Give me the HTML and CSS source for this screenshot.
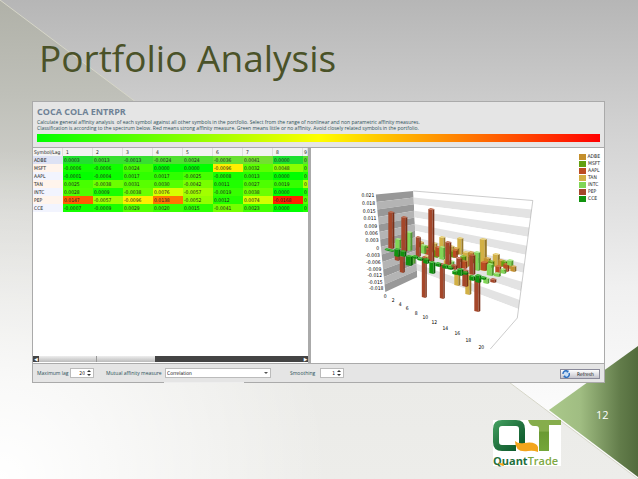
FILE: index.html
```html
<!DOCTYPE html>
<html lang="en">
<head>
<meta charset="UTF-8">
<meta name="viewport" content="width=device-width, initial-scale=1.0">
<title>Portfolio Analysis</title>
<link rel="stylesheet" href="styles.css">
</head>
<body>
<div class="slide">
    <svg class="backdrop" viewBox="0 0 638 479" preserveAspectRatio="none" aria-hidden="true">
        <defs>
            <linearGradient id="shade" x1="0" y1="0" x2="0" y2="1">
                <stop offset="0" stop-color="#b0b1a8"/>
                <stop offset="0.2" stop-color="#bfc0b9"/>
                <stop offset="0.45" stop-color="#d6d6d2"/>
                <stop offset="0.8" stop-color="#ebebe8"/>
                <stop offset="1" stop-color="#ededea"/>
            </linearGradient>
            <radialGradient id="glow" gradientUnits="userSpaceOnUse" cx="0" cy="479" r="330">
                <stop offset="0" stop-color="#fff" stop-opacity="1"/>
                <stop offset="1" stop-color="#fff" stop-opacity="0"/>
            </radialGradient>
            <linearGradient id="green" x1="0" y1="0" x2="1" y2="0">
                <stop offset="0" stop-color="#abc98b"/>
                <stop offset="0.35" stop-color="#a0bd82"/>
                <stop offset="0.8" stop-color="#627c4a"/>
                <stop offset="1" stop-color="#526b3c"/>
            </linearGradient>
        </defs>
        <polygon points="0,0 638,479 0,479" fill="url(#shade)"/>
        <polygon points="0,0 638,479 0,479" fill="url(#glow)"/>
        <path d="M0 0L638 479" stroke="#d6d6c8" stroke-width="1"/>
        <polygon points="549,410 638,346 638,477" fill="url(#green)"/>
    </svg>

    <h1 class="heading">Portfolio Analysis</h1>

    <div class="panel">
        <div class="intro">
            <h2>COCA COLA ENTRPR</h2>
            <p>Calculate general affinity analysis  of each symbol against all other symbols in the portfolio. Select from the range of nonlinear and non parametric affinity measures.</p>
            <p>Classification is according to the spectrum below. Red means strong affinity measure. Green means little or no affinity. Avoid closely related symbols in the portfolio.</p>
            <div class="spectrum"></div>
        </div>
        <div class="content">
            <div class="left">
                <table class="table">
                    <thead>
                        <tr>
                            <th class="symbol">Symbol/Lag</th>
                            <th>1</th><th>2</th><th>3</th><th>4</th>
                            <th>5</th><th>6</th><th>7</th><th>8</th>
                            <th class="last">9</th>
                        </tr>
                    </thead>
                    <tbody id="lagBody"></tbody>
                </table>
                <div class="scroll">
                    <span class="arrow">◀</span>
                    <span class="thumb"></span>
                    <span class="arrow end">▶</span>
                </div>
            </div>
            <div class="splitter"></div>
            <div class="right">
                <svg class="chart" id="chart" viewBox="311 148 292 215"></svg>
                <ul class="legend" id="legend"></ul>
            </div>
        </div>
        <div class="controls">
            <label for="lag">Maximum lag</label>
            <span class="spin">
                <input id="lag" type="text" inputmode="numeric" value="20">
                <svg viewBox="0 0 4 8"><path d="M0 3L2 1L4 3ZM0 5L2 7L4 5Z" fill="#333"/></svg>
            </span>
            <label class="wide" for="measure">Mutual affinity measure</label>
            <span class="drop">
                <select id="measure"><option>Correlation</option></select>
                <svg viewBox="0 0 4 8"><path d="M0 3H4L2 5Z" fill="#555"/></svg>
            </span>
            <label class="smooth" for="smoothing">Smoothing</label>
            <span class="spin">
                <input id="smoothing" type="text" inputmode="numeric" value="1">
                <svg viewBox="0 0 4 8"><path d="M0 3L2 1L4 3ZM0 5L2 7L4 5Z" fill="#333"/></svg>
            </span>
            <button class="refresh" type="button">
                <svg viewBox="0 0 8 8">
                    <rect x="2" y="0" width="5" height="7" fill="#c9dff5"/>
                    <path d="M1 4a3 3 0 0 1 4-3M7 3a3 3 0 0 1-4 4" fill="none" stroke="#2c6fc0" stroke-width="1.4"/>
                    <path d="M4 0L7 1L5 3ZM4 8L1 7L3 5Z" fill="#2c6fc0"/>
                </svg>
                <span>Refresh</span>
            </button>
        </div>
    </div>

    <div class="footer">
        <svg class="logo" viewBox="0 0 70 48" role="img" aria-label="QuantTrade">
            <defs>
                <linearGradient id="q" x1="0" y1="0" x2="1" y2="1">
                    <stop offset="0" stop-color="#3f9a5c"/>
                    <stop offset="0.5" stop-color="#23733f"/>
                    <stop offset="1" stop-color="#0c5a2c"/>
                </linearGradient>
                <linearGradient id="t" x1="0" y1="0" x2="0" y2="1">
                    <stop offset="0.35" stop-color="#86ad4c"/>
                    <stop offset="0.4" stop-color="#6a9a33"/>
                    <stop offset="1" stop-color="#74a63a"/>
                </linearGradient>
            </defs>
            <rect x="1" y="0" width="68" height="46" fill="#fff"/>
            <path d="M24 28H10Q4 28 4 22V9Q4 3 10 3H24Q30 3 30 9V24" fill="none" stroke="url(#q)" stroke-width="6"/>
            <path d="M36 0H69V5H57V31H47V9Q47 6 44 6H42Q38 6 36 0Z" fill="url(#t)"/>
            <path d="M23 21Q26 24 32 23Q44 21 46 27V32Q41 30 36 31Q23 33 23 21Z" fill="#f3a51c"/>
            <text x="1" y="45" class="brand"><tspan class="quant">Quant</tspan><tspan class="trade">Trade</tspan></text>
            <path d="M6 42Q8 44 11 43L12 46Q8 46 6 42Z" fill="#f3a51c"/>
        </svg>
        <span class="page">12</span>
    </div>
</div>

<script src="chart.js"></script>
</body>
</html>
```

FILE: styles.css
```css
body {
    margin: 0;
    font-family: "Open Sans", "Noto Sans", sans-serif;
}
.slide {
    position: relative;
    box-sizing: border-box;
    min-height: 100vh;
    padding: 32px 33px 0 32px;
    background: linear-gradient(#b6b6b6 0%, #d0d0d0 25%, #f0f0f0 60%, #fbfbfb 85%, #fbfbfb 100%);
    overflow: hidden;
}
.backdrop {
    position: absolute;
    left: 0;
    top: 0;
    width: 100%;
    height: 100%;
}
.heading {
    position: relative;
    margin: 0 0 17px;
    padding-left: 7px;
    font-size: 37px;
    line-height: 52px;
    font-weight: 400;
    color: #4a5228;
}
.panel {
    position: relative;
    border: 1px solid #aaa;
    background: #e5e5e5;
    font-family: "DejaVu Sans Condensed", "DejaVu Sans", sans-serif;
    font-size: 5px;
    color: #222;
}
/* break in the lower border */
.panel::after {
    content: "";
    position: absolute;
    left: 23%;
    bottom: -1px;
    width: 14%;
    height: 1px;
    background: #eee;
}
.intro {
    padding: 5px 4px;
    border-bottom: 1px solid #aaa;
}
.intro h2 {
    margin: 0 0 2px;
    font-family: "Open Sans", sans-serif;
    font-size: 9px;
    line-height: 10px;
    color: #6f8296;
}
.intro p {
    margin: 0;
    font-family: "Open Sans", sans-serif;
    font-size: 5px;
    line-height: 6px;
    white-space: pre;
    color: #2c5058;
}
.spectrum {
    height: 8px;
    margin-top: 3px;
    background: linear-gradient(90deg, #0f0, #ff0 50%, #f00);
}
.content {
    display: flex;
    height: 215px;
    background: #fff;
}
.left {
    display: flex;
    flex: 48 1 0;
    flex-direction: column;
    justify-content: space-between;
    min-width: 0;
}
.splitter {
    width: 3px;
    background: #aaa;
}
.right {
    position: relative;
    flex: 51 1 0;
    min-width: 0;
}

/* lag table */
.table {
    width: 100%;
    table-layout: fixed;
    border-collapse: collapse;
}
.table th,
.table td {
    box-sizing: border-box;
    height: 8px;
    padding: 0 0 0 1px;
    line-height: 8px;
    font-weight: 400;
    text-align: left;
    white-space: nowrap;
}
.table thead th {
    width: 30px;
    padding-left: 3px;
    background: #f3f3f3;
    box-shadow: inset -1px 0 #ddd;
}
.table thead .symbol {
    width: 30px;
    padding-left: 1px;
}
.table thead .last {
    width: auto;
    padding-left: 1px;
}
.table tbody th {
    background: #f2f4fe;
}
.table tbody tr:nth-child(even) th {
    background: #fff4ec;
}
.table tbody tr:first-child th {
    background: #dde2f4;
}
.table tbody tr:first-child td {
    box-shadow: inset 0 0 0 8px rgba(110, 130, 190, 0.25);
}
.scroll {
    display: flex;
    height: 6px;
    margin-bottom: 1px;
    background: #444;
    color: #fff;
    line-height: 6px;
}
.arrow {
    width: 6px;
    text-align: center;
}
.thumb {
    width: 42%;
    background: linear-gradient(90deg, transparent 49%, #999 49%, #999 50%, transparent 50%), linear-gradient(#eee, #bbb);
}
.end {
    margin-left: auto;
}

/* chart */
.chart {
    display: block;
    width: 100%;
    height: 100%;
    font-size: 5px;
}
.legend {
    position: absolute;
    top: 5px;
    right: 4px;
    margin: 0;
    padding: 0;
    list-style: none;
}
.legend li {
    display: flex;
    align-items: center;
    gap: 2px;
    width: 21px;
    height: 7px;
    line-height: 7px;
}
.legend i {
    width: 7px;
    height: 6px;
}

/* bottom bar */
.controls {
    display: flex;
    align-items: center;
    height: 18px;
    padding: 0 4px;
    border-top: 1px solid #aaa;
}
.controls label {
    width: 33px;
    font-family: "Open Sans", sans-serif;
    font-size: 5px;
    color: #2c5058;
}
.controls .wide {
    width: 59px;
    margin-left: 12px;
}
.controls .smooth {
    width: 30px;
    margin-left: 19px;
}
.spin,
.drop {
    display: flex;
    align-items: center;
    box-sizing: border-box;
    width: 24px;
    height: 10px;
    padding-right: 2px;
    border: 1px solid #bbb;
    background: #fff;
}
.drop {
    width: 106px;
}
.spin svg,
.drop svg {
    width: 4px;
    height: 8px;
}
.spin input,
.drop select {
    flex: 1;
    min-width: 0;
    height: 8px;
    margin: 0;
    padding: 0 2px 0 1px;
    border: 0;
    background: none;
    font: inherit;
    line-height: 8px;
    color: #111;
    appearance: none;
}
.spin input {
    text-align: right;
}
.refresh {
    display: flex;
    align-items: center;
    gap: 7px;
    box-sizing: border-box;
    width: 40px;
    height: 10px;
    margin: 1px 0 0 auto;
    padding: 0 1px;
    border: 1px solid #8a8a9a;
    background: linear-gradient(#fff, #c4c4cc);
    font: inherit;
    color: #111;
}
.refresh svg {
    width: 8px;
    height: 8px;
}

/* logo and page number */
.footer {
    position: relative;
    display: flex;
    justify-content: flex-end;
    align-items: flex-start;
    gap: 34px;
    padding-top: 25px;
}
.logo {
    width: 70px;
    height: 48px;
    margin-top: 12px;
}
.brand {
    font-size: 11px;
}
.quant {
    font-weight: 700;
    fill: #1f6f3c;
}
.trade {
    font-weight: 600;
    fill: #7da843;
}
.page {
    width: 9px;
    font-size: 11px;
    line-height: 14px;
    color: #fff;
}
```

FILE: chart.js
```js
var lags = [
    {symbol: 'ADBE', values: ['0.0003', '0.0013', '-0.0013', '-0.0024', '0.0024', '-0.0036', '0.0041', '0.0000'], next: 0.003},
    {symbol: 'MSFT', values: ['-0.0006', '-0.0006', '0.0024', '0.0000', '0.0000', '-0.0096', '0.0032', '0.0048'], next: 0.003},
    {symbol: 'AAPL', values: ['-0.0001', '-0.0004', '0.0017', '0.0017', '-0.0025', '-0.0008', '0.0013', '0.0000'], next: 0.001},
    {symbol: 'TAN', values: ['0.0025', '-0.0038', '0.0031', '0.0030', '-0.0042', '0.0011', '0.0027', '0.0019'], next: 0.006},
    {symbol: 'INTC', values: ['0.0028', '0.0009', '-0.0038', '0.0076', '-0.0057', '-0.0019', '0.0038', '0.0000'], next: 0.001},
    {symbol: 'PEP', values: ['0.0147', '-0.0057', '-0.0096', '0.0138', '-0.0052', '0.0012', '0.0074', '-0.0168'], next: 0.003},
    {symbol: 'CCE', values: ['-0.0007', '-0.0009', '0.0029', '0.0020', '0.0015', '-0.0041', '0.0023', '0.0000'], next: 0.001}
];

// front, side and top colour of each series
var series = {
    ADBE: ['#c48f2c', '#93681a', '#d9a94c'],
    MSFT: ['#62a010', '#437508', '#86c038'],
    AAPL: ['#bc4c22', '#8a3414', '#d46c44'],
    TAN: ['#d2b045', '#98792a', '#e6cd70'],
    INTC: ['#80d656', '#4f9a30', '#a8ec86'],
    PEP: ['#a5472a', '#7a3018', '#bd6446'],
    CCE: ['#11930f', '#086208', '#35b52c']
};

// series, x, top, bottom, width
var bars = [
    ['TAN', 434, 243, 252, 5], ['TAN', 442, 237, 256, 5], ['TAN', 460, 238, 254, 5], ['TAN', 451, 246, 254, 5],
    ['TAN', 483, 239, 270, 6], ['TAN', 496, 254, 266, 6], ['TAN', 466, 252, 266, 6], ['TAN', 509, 262, 268, 4],
    ['ADBE', 421, 242, 247, 4], ['ADBE', 429, 246, 251, 5], ['ADBE', 439, 249, 255, 5], ['ADBE', 456, 248, 254, 5],
    ['ADBE', 471, 252, 257, 5], ['ADBE', 487, 258, 263, 6], ['ADBE', 501, 260, 266, 5], ['ADBE', 513, 266, 271, 5],
    ['MSFT', 425, 246, 251, 5], ['MSFT', 436, 250, 257, 4], ['MSFT', 453, 251, 257, 5], ['MSFT', 463, 256, 262, 5],
    ['MSFT', 475, 258, 263, 5], ['MSFT', 491, 261, 267, 5], ['MSFT', 504, 261, 266, 5],
    ['AAPL', 427, 249, 254, 5], ['AAPL', 438, 247, 256, 5], ['AAPL', 455, 250, 257, 4], ['AAPL', 464, 261, 268, 5],
    ['AAPL', 484, 262, 270, 6], ['AAPL', 498, 266, 273, 5], ['AAPL', 506, 264, 271, 5],
    ['INTC', 398, 239, 248, 5], ['INTC', 409, 232, 250, 5], ['INTC', 423, 245, 253, 5], ['INTC', 442, 247, 259, 5],
    ['INTC', 451, 261, 267, 5], ['INTC', 477, 252, 270, 5], ['INTC', 490, 264, 275, 6], ['INTC', 510, 260, 265, 5],
    ['INTC', 503, 269, 273, 5], ['INTC', 497, 273, 276, 6], ['INTC', 412, 256, 263, 5], ['INTC', 486, 278, 283, 5],
    ['TAN', 457, 272, 285, 5], ['TAN', 468, 274, 294, 5], ['TAN', 426, 256, 260, 4], ['TAN', 446, 260, 265, 4],
    ['PEP', 391, 212, 248, 5], ['PEP', 404, 217, 251, 5], ['PEP', 402, 256, 272, 4], ['PEP', 418, 237, 256, 4],
    ['PEP', 431, 209, 261, 5], ['PEP', 424, 257, 297, 4], ['PEP', 448, 242, 264, 5], ['PEP', 442, 264, 298, 4],
    ['PEP', 459, 258, 268, 5], ['PEP', 465, 270, 286, 5], ['PEP', 472, 255, 274, 5], ['PEP', 477, 278, 311, 5],
    ['PEP', 454, 265, 269, 5], ['PEP', 493, 279, 282, 5], ['PEP', 397, 254, 260, 4],
    ['CCE', 387, 249, 250, 4], ['CCE', 391, 250, 251, 5], ['CCE', 397, 249, 256, 5], ['CCE', 403, 251, 256, 5],
    ['CCE', 409, 256, 265, 6], ['CCE', 415, 256, 258, 5], ['CCE', 420, 258, 260, 5], ['CCE', 426, 259, 263, 5],
    ['CCE', 432, 262, 273, 5], ['CCE', 438, 263, 266, 5], ['CCE', 445, 265, 268, 5], ['CCE', 450, 267, 269, 5],
    ['CCE', 455, 271, 274, 5], ['CCE', 460, 269, 275, 5], ['CCE', 465, 272, 274, 5], ['CCE', 472, 276, 280, 5],
    ['CCE', 478, 275, 282, 5], ['CCE', 483, 277, 279, 5]
];

function heat(value) {
    var t = Math.min(Math.abs(value) / 0.018, 1);
    if (t < 0.5) {
        return 'rgb(' + Math.round(510 * t) + ',255,0)';
    }
    return 'rgb(255,' + Math.round(510 * (1 - t)) + ',0)';
}

function loadTable() {
    var html = '';
    lags.forEach(function(row) {
        html += '<tr><th>' + row.symbol + '</th>';
        row.values.forEach(function(value) {
            html += '<td style="background-color: ' + heat(value) + '">' + value + '</td>';
        });
        html += '<td style="background-color: ' + heat(row.next) + '">0</td></tr>';
    });
    document.getElementById('lagBody').innerHTML = html;
}

function loadLegend() {
    var html = '';
    Object.keys(series).forEach(function(name) {
        html += '<li><i style="background: ' + series[name][0] + '"></i>' + name + '</li>';
    });
    document.getElementById('legend').innerHTML = html;
}

function polygon(points, fill) {
    return '<polygon points="' + points.join(' ') + '" fill="' + fill + '"/>';
}

// striped wall between edge a (top, bottom) and edge b (top, bottom)
function wall(a, b, colors) {
    var count = 13;
    var html = '';
    function at(edge, i) {
        var t = i / count;
        return [edge[0] + (edge[2] - edge[0]) * t, edge[1] + (edge[3] - edge[1]) * t];
    }
    for (var i = 0; i < count; i++) {
        html += polygon([at(a, i), at(b, i), at(b, i + 1), at(a, i + 1)], colors[i % 2]);
    }
    return html;
}

function bar(item) {
    var c = series[item[0]];
    var w = item[4] + 1;
    var x = item[1] - w / 2;
    var r = x + w;
    var m = x + w * 0.7;
    var top = item[2];
    var bottom = item[3];
    return polygon([[x, top], [m, top + 1], [m, bottom + 1], [x, bottom]], c[0]) +
        polygon([[m, top + 1], [r, top], [r, bottom], [m, bottom + 1]], c[1]) +
        polygon([[x, top], [x + w * 0.4, top - 1], [r, top], [m, top + 1]], c[2]);
}

function loadChart() {
    var html = wall([375.5, 194.5, 385, 292], [413, 191, 417, 277], ['#989898', '#b4b4b4']);
    html += wall([413, 191, 417, 277], [532.5, 200.5, 517, 318], ['#fff', '#e3e3e3']);
    html += '<path d="M413 191L532.5 200.5L517 318L490 349" fill="none" stroke="#aaa" stroke-width="0.6"/>';

    var levels = ['0.021', '0.018', '0.015', '0.011', '0.009', '0.006', '0.003', '0', '-0.003', '-0.006', '-0.009', '-0.012', '-0.015', '-0.018'];
    levels.forEach(function(text, i) {
        var y = 197 + i * 7.9 - i * i * 0.055;
        html += '<text x="' + (374 + i * 0.7) + '" y="' + y + '" text-anchor="end">' + text + '</text>';
    });
    var ticks = [[385, 298], [393, 302], [400, 306], [407, 310], [416, 315], [425, 319], [434, 324], [445, 330], [457, 335], [468, 342], [481, 349]];
    ticks.forEach(function(p, i) {
        html += '<text x="' + p[0] + '" y="' + p[1] + '" text-anchor="middle">' + i * 2 + '</text>';
    });

    bars.forEach(function(item) {
        html += bar(item);
    });
    document.getElementById('chart').innerHTML = html;
}

loadTable();
loadLegend();
loadChart();
```
